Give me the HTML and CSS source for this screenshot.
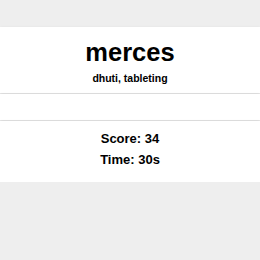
FILE: index.html
```html
<!DOCTYPE html>
<html>
<head>
<meta charset="utf-8">
<link rel="stylesheet" href="styles.css">
</head>
<body>
<main class="page">
  <section class="card word-card">
    <h1 class="word">merces</h1>
    <p class="hint">dhuti, tableting</p>
  </section>
  <section class="card input-card"></section>
  <section class="card stats-card">
    <p class="stat">Score: 34</p>
    <p class="stat">Time: 30s</p>
  </section>
</main>
</body>
</html>
```
FILE: styles.css
```css
html, body {
  margin: 0;
  padding: 0;
  background: #eeeeee;
  font-family: "Liberation Sans", Arial, sans-serif;
  color: #000;
}
.page {
  display: flex;
  flex-direction: column;
  gap: 1px;
  padding-top: 27px;
}
.card {
  background: #fff;
  box-shadow: 0 1px 3px rgba(0,0,0,0.1);
  text-align: center;
}
.word-card {
  padding: 11px 0 8px;
}
.word {
  margin: 0;
  font-size: 25.5px;
  line-height: 28px;
  font-weight: bold;
}
.hint {
  margin: 6px 0 0;
  font-size: 10.5px;
  line-height: 13px;
  font-weight: bold;
}
.input-card {
  height: 26px;
}
.stats-card {
  padding: 7px 0 12px;
}
.stat {
  margin: 0;
  font-size: 13px;
  line-height: 21px;
  font-weight: bold;
}
```
